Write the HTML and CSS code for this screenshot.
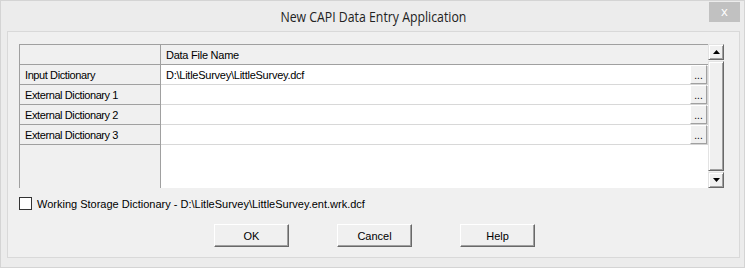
FILE: index.html
```html
<!DOCTYPE html>
<html>
<head>
    <link rel="stylesheet" href="styles.css">
</head>
<body>
    <div class="window">
        <div class="titlebar">
            <span></span>
            <div class="title">New CAPI Data Entry Application</div>
            <div class="close">x</div>
        </div>

        <div class="panel">
            <div class="grid">
                <div class="grid-body">
                    <div class="labels">
                        <div class="cell head"></div>
                        <div class="cell label">Input Dictionary</div>
                        <div class="cell label">External Dictionary 1</div>
                        <div class="cell label">External Dictionary 2</div>
                        <div class="cell label">External Dictionary 3</div>
                    </div>
                    <div class="files">
                        <div class="cell head">Data File Name</div>
                        <div class="cell file"><span class="path">D:\LitleSurvey\LittleSurvey.dcf</span><div class="dots">...</div></div>
                        <div class="cell file"><span class="path"></span><div class="dots">...</div></div>
                        <div class="cell file"><span class="path"></span><div class="dots">...</div></div>
                        <div class="cell file"><span class="path"></span><div class="dots">...</div></div>
                    </div>
                </div>
                <div class="scrollbar">
                    <div class="sb-btn">
                        <svg width="7" height="4" viewBox="0 0 7 4"><path d="M3.5 0 L7 4 L0 4 Z" fill="#000"/></svg>
                    </div>
                    <div class="sb-thumb"></div>
                    <div class="sb-btn">
                        <svg width="7" height="4" viewBox="0 0 7 4"><path d="M0 0 L7 0 L3.5 4 Z" fill="#000"/></svg>
                    </div>
                </div>
            </div>

            <label class="check-row">
                <span class="checkbox"></span>
                <span>Working Storage Dictionary - D:\LitleSurvey\LittleSurvey.ent.wrk.dcf</span>
            </label>

            <div class="buttons">
                <button>OK</button>
                <button>Cancel</button>
                <button>Help</button>
            </div>
        </div>
    </div>
</body>
</html>
```

FILE: styles.css
```css
body {
    margin: 0;
    background: #ececec;
    font-family: 'Liberation Sans', Arial, sans-serif;
    color: #000;
}

.window {
    width: 745px;
    height: 268px;
    box-sizing: border-box;
    border: 1px solid #d4d4d4;
    background: #ececec;
    padding: 0 4px 0 6px;
}

.titlebar {
    height: 30px;
    display: grid;
    grid-template-columns: 1fr auto 1fr;
    align-items: start;
}

.title {
    font-family: 'Open Sans', 'Noto Sans', sans-serif;
    font-size: 15px;
    color: #222;
    margin-top: 5px;
    transform: scaleX(0.82);
}

.close {
    justify-self: end;
    width: 31px;
    height: 20px;
    margin-top: 1px;
    background: #c1c1c1;
    color: #fff;
    font-family: 'Open Sans', sans-serif;
    font-size: 13px;
    line-height: 18px;
    text-align: center;
}

.panel {
    height: 227px;
    box-sizing: border-box;
    border: 1px solid #d9d9d9;
    background: #f0f0f0;
    padding: 12px 0 0 11px;
    font-size: 11px;
}

.grid {
    display: flex;
    width: 705px;
    height: 144px;
}

.grid-body {
    flex: 1;
    display: flex;
    border-left: 1px solid #a0a0a0;
    border-top: 1px solid #a0a0a0;
    background: #fff;
}

.labels {
    width: 140px;
    background: #f0f0f0;
    border-right: 1px solid #a0a0a0;
}

.files {
    flex: 1;
}

.cell {
    height: 19px;
    border-bottom: 1px solid #d8d8d8;
    display: flex;
    align-items: center;
    letter-spacing: -0.25px;
}

.labels .cell {
    border-bottom-color: #a0a0a0;
    padding-left: 5px;
}

.label {
    letter-spacing: -0.4px;
}

.head {
    background: #f0f0f0;
    border-bottom: 1px solid #a0a0a0;
}

.files .head {
    padding-left: 5px;
}

.file {
    justify-content: space-between;
}

.path {
    padding-left: 5px;
}

.dots {
    width: 15px;
    height: 17px;
    margin-right: 1px;
    background: #f0f0f0;
    border: 1px solid;
    border-color: #fff #a0a0a0 #a0a0a0 #fff;
    box-shadow: 1px 1px 0 #d4d4d4;
    font-size: 10px;
    line-height: 20px;
    text-align: center;
    letter-spacing: 0;
}

.scrollbar {
    width: 16px;
    display: flex;
    flex-direction: column;
    background: #f0f0f0;
}

.sb-btn,
.sb-thumb {
    box-sizing: border-box;
    background: #f0f0f0;
    border: 1px solid;
    border-color: #e3e3e3 #696969 #696969 #e3e3e3;
    box-shadow: inset 1px 1px 0 #fff, inset -1px -1px 0 #a0a0a0;
}

.sb-btn {
    height: 16px;
    display: flex;
    align-items: center;
    justify-content: center;
}

.sb-thumb {
    flex: 1;
    margin: 1px 0;
}

.check-row {
    display: flex;
    align-items: center;
    gap: 5px;
    margin-top: 9px;
    font-size: 11px;
}

.checkbox {
    width: 11px;
    height: 11px;
    background: #fff;
    border: 1px solid #333;
}

.buttons {
    display: flex;
    gap: 48px;
    margin: 14px 0 0 195px;
}

button {
    width: 75px;
    height: 23px;
    background: #f0f0f0;
    border: 1px solid;
    border-color: #fff #696969 #696969 #fff;
    box-shadow: inset -1px -1px 0 #a0a0a0;
    font-family: 'Liberation Sans', Arial, sans-serif;
    font-size: 11px;
    color: #000;
    padding: 0;
}
```
